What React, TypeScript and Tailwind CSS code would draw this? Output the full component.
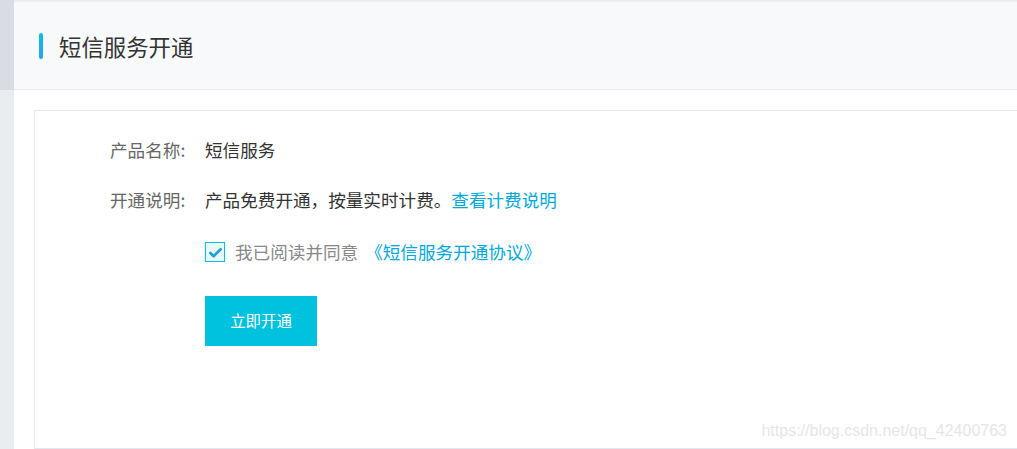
const font = { fontFamily: '"Microsoft YaHei", "Noto Sans CJK SC", sans-serif' };

export default function App() {
  return (
    <div className="flex h-[449px] w-[1017px] overflow-hidden bg-white" style={font}>
      {/* left rail */}
      <div className="flex w-[14px] shrink-0 flex-col">
        <div className="h-[90px] bg-[#d9dde3]" />
        <div className="flex-1 bg-[#e9ecf0]" />
      </div>

      <div className="flex min-w-0 flex-1 flex-col">
        <div className="h-[3px] bg-gradient-to-b from-[#e6e8eb] to-[#f8f9fb]" />
        <div className="flex h-[87px] items-center border-b border-[#e6e9ed] bg-[#f8f9fb] pl-[25px]">
          <span className="mr-[16px] h-[26px] w-[4px] rounded-full bg-gradient-to-b from-[#00c1de] to-[#2a9ff0]" />
          <h1 className="text-[22.4px] leading-none text-[#333]">短信服务开通</h1>
        </div>

        <div className="flex-1 pt-[20px] pl-[20px]">
          <div className="relative h-full border border-r-0 border-[#e3e8ee] pt-[26px]">
            <div className="flex h-[26px] items-center text-[17.6px]">
              <span className="w-[170px] pl-[75px] text-[#666]">产品名称:</span>
              <span className="text-[#333]">短信服务</span>
            </div>
            <div className="mt-[24px] flex h-[26px] items-center text-[17.6px]">
              <span className="w-[170px] pl-[75px] text-[#666]">开通说明:</span>
              <span className="text-[#333]">产品免费开通，按量实时计费。</span>
              <a className="text-[#00a9d9]">查看计费说明</a>
            </div>
            <div className="mt-[26px] flex h-[26px] items-center pl-[170px] text-[17.6px]">
              <span className="mr-[10px] flex h-[20px] w-[20px] items-center justify-center border border-[#00c1de] bg-[#e8f8fb]">
                <svg viewBox="0 0 16 16" className="h-[15px] w-[15px]">
                  <path d="M2.5 8.5 L6 12 L13.5 4.5" fill="none" stroke="#1aa3cf" strokeWidth="2.8" strokeLinecap="round" strokeLinejoin="round" />
                </svg>
              </span>
              <span className="text-[#888]">我已阅读并同意</span>
              <a className="ml-[7px] text-[#00a9d9]">《短信服务开通协议》</a>
            </div>
            <div className="mt-[31px] pl-[170px]">
              <button className="h-[50px] w-[112px] bg-[#00c1de] text-[15.4px] text-white">立即开通</button>
            </div>
            <span
              className="absolute bottom-[5px] right-[10px] text-[16px] text-[#e6e6e6]"
              style={{ fontFamily: '"Liberation Sans", Arial, sans-serif' }}
            >
              https://blog.csdn.net/qq_42400763
            </span>
          </div>
        </div>
      </div>
    </div>
  );
}
